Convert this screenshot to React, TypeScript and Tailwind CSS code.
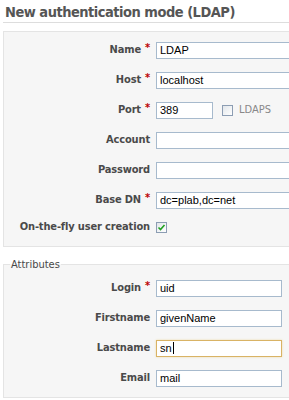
import React from "react";

const labelFont = { fontFamily: '"DejaVu Sans Condensed", "DejaVu Sans", sans-serif' };
const inputFont = { fontFamily: '"Liberation Sans", Arial, sans-serif' };

function Label({ text, required }: { text: string; required?: boolean }) {
  return (
    <div
      className="w-[146px] shrink-0 text-right text-[11px] font-bold text-[#4a4a4a] leading-[14px] tracking-[-0.15px]"
      style={labelFont}
    >
      {text}
      {required && <span className="ml-[4px] text-[#bb0000] relative top-[-2px]">*</span>}
    </div>
  );
}

function Field({
  value,
  width = "w-[160px]",
  focused,
}: {
  value: string;
  width?: string;
  focused?: boolean;
}) {
  return (
    <div
      className={`${width} h-[17px] bg-white border flex items-center pl-[3px] text-[11px] text-black ${
        focused
          ? "border-[#d9b365] shadow-[0_0_2px_#ecd9a8]"
          : "border-[#a7bacd]"
      }`}
      style={inputFont}
    >
      {value}
      {focused && <span className="w-px h-[12px] bg-black ml-px" />}
    </div>
  );
}

function Row({ children }: { children: React.ReactNode }) {
  return <div className="flex items-center gap-[6px] h-[30px]">{children}</div>;
}

function Checkbox({ checked }: { checked?: boolean }) {
  return (
    <span className="w-[11px] h-[11px] border border-[#8c9db3] bg-gradient-to-br from-[#e2e6ea] to-white flex items-center justify-center">
      {checked && (
        <svg width="9" height="9" viewBox="0 0 9 9">
          <path d="M1.5 4.5 L3.5 6.5 L7.5 2" fill="none" stroke="#21a121" strokeWidth="1.6" />
        </svg>
      )}
    </span>
  );
}

export default function App() {
  return (
    <div className="w-[289px] h-[400px] overflow-hidden bg-white pl-[3px]">
      <h2
        className="text-[14.5px] font-bold text-[#555] leading-[18px] tracking-[-0.5px] pt-[3px] pb-[1px] pl-[2px] border-b border-[#dddddd] w-[300px]"
        style={labelFont}
      >
        New authentication mode (LDAP)
      </h2>

      <div className="mt-[8px] w-[300px] border border-[#e4e4e4] bg-[#f6f6f6] pt-[3px] pb-[7px]">
        <Row>
          <Label text="Name" required />
          <Field value="LDAP" />
        </Row>
        <Row>
          <Label text="Host" required />
          <Field value="localhost" />
        </Row>
        <Row>
          <Label text="Port" required />
          <Field value="389" width="w-[57px]" />
          <span className="ml-[3px] flex items-center gap-[6px]">
            <Checkbox />
            <span className="text-[11px] text-[#888]" style={labelFont}>
              LDAPS
            </span>
          </span>
        </Row>
        <Row>
          <Label text="Account" />
          <Field value="" />
        </Row>
        <Row>
          <Label text="Password" />
          <Field value="" />
        </Row>
        <Row>
          <Label text="Base DN" required />
          <Field value="dc=plab,dc=net" />
        </Row>
        <div className="flex items-center gap-[6px] h-[24px]">
          <Label text="On-the-fly user creation" />
          <Checkbox checked />
        </div>
      </div>

      <fieldset className="mt-[11px] w-[300px] border border-[#e4e4e4] bg-[#f6f6f6] pb-[4px]">
        <legend
          className="ml-[6px] px-px text-[11px] text-[#484848] leading-[13px]"
          style={labelFont}
        >
          Attributes
        </legend>
        <div className="pt-[2px]">
          <Row>
            <Label text="Login" required />
            <Field value="uid" width="w-[126px]" />
          </Row>
          <Row>
            <Label text="Firstname" />
            <Field value="givenName" width="w-[126px]" />
          </Row>
          <Row>
            <Label text="Lastname" />
            <Field value="sn" width="w-[126px]" focused />
          </Row>
          <Row>
            <Label text="Email" />
            <Field value="mail" width="w-[126px]" />
          </Row>
        </div>
      </fieldset>
    </div>
  );
}
